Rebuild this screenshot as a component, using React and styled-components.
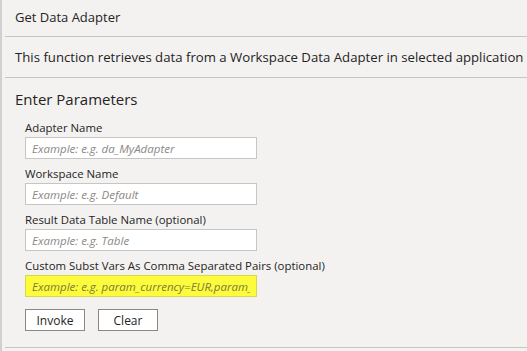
import styled, { createGlobalStyle } from 'styled-components'

const GlobalStyle = createGlobalStyle`
    html, body {
        margin: 0;
        padding: 0;
        background: #f3f2f1;
    }
    body {
        font-family: "Open Sans", "Noto Sans", sans-serif;
        color: #252423;
    }
`;

const fields = [
    { label: 'Adapter Name', placeholder: 'Example: e.g. da_MyAdapter' },
    { label: 'Workspace Name', placeholder: 'Example: e.g. Default' },
    { label: 'Result Data Table Name (optional)', placeholder: 'Example: e.g. Table' },
    {
        label: 'Custom Subst Vars As Comma Separated Pairs (optional)',
        placeholder: 'Example: e.g. param_currency=EUR,param_',
        highlight: true,
    },
];

const App = () => {
    return (
        <>
            <GlobalStyle />
            <Pane>
                <TitleBar>Get Data Adapter</TitleBar>
                <Description>
                    This function retrieves data from a Workspace Data Adapter in selected application
                </Description>
                <Params>
                    <Heading>Enter Parameters</Heading>
                    <Form>
                        {fields.map((f) => (
                            <Field key={f.label}>
                                <Label>{f.label}</Label>
                                <Input $highlight={f.highlight} placeholder={f.placeholder} />
                            </Field>
                        ))}
                        <Buttons>
                            <Button>Invoke</Button>
                            <Button>Clear</Button>
                        </Buttons>
                    </Form>
                </Params>
            </Pane>
        </>
    );
};

const Pane = styled.div`
    height: 351px;
    box-sizing: border-box;
    border-left: 2px solid #d2d0ce;
    padding-left: 3px;
    overflow: hidden;
`;

const Section = styled.div`
    border-bottom: 1px solid #c8c6c4;
    padding-left: 10px;
    white-space: nowrap;
`;

const TitleBar = styled(Section)`
    height: 36px;
    line-height: 34px;
    font-size: 13px;
`;

const Description = styled(Section)`
    height: 40px;
    line-height: 41px;
    font-size: 13.2px;
`;

const Params = styled(Section)`
    height: 270px;
    padding-top: 10px;
    box-sizing: border-box;
`;

const Heading = styled.div`
    font-size: 15px;
    line-height: 22px;
`;

const Form = styled.div`
    padding-left: 10px;
    padding-top: 10px;
`;

const Field = styled.div`
    display: flex;
    flex-direction: column;
    margin-bottom: 7px;
`;

const Label = styled.div`
    font-size: 11.4px;
    line-height: 16px;
    margin-bottom: 1px;
`;

const Input = styled.input`
    box-sizing: border-box;
    width: 232px;
    height: 22px;
    margin: 0;
    padding: 0 6px;
    font-family: "Open Sans", "Noto Sans", sans-serif;
    font-size: 11.5px;
    font-style: italic;
    background: ${(p) => (p.$highlight ? '#fcfc3c' : '#ffffff')};
    border: 1px solid ${(p) => (p.$highlight ? '#d8d84a' : '#c8c6c4')};
    outline: none;

    &::placeholder {
        color: ${(p) => (p.$highlight ? '#7d7a3c' : '#8a8886')};
        opacity: 1;
    }
`;

const Buttons = styled.div`
    display: flex;
    gap: 13px;
    margin-top: 12px;
`;

const Button = styled.button`
    box-sizing: border-box;
    width: 60px;
    height: 22px;
    padding: 0;
    background: #ffffff;
    border: 1px solid #8a8886;
    border-radius: 0;
    font-family: "Open Sans", "Noto Sans", sans-serif;
    font-size: 12px;
    color: #252423;
`;

export default App;
